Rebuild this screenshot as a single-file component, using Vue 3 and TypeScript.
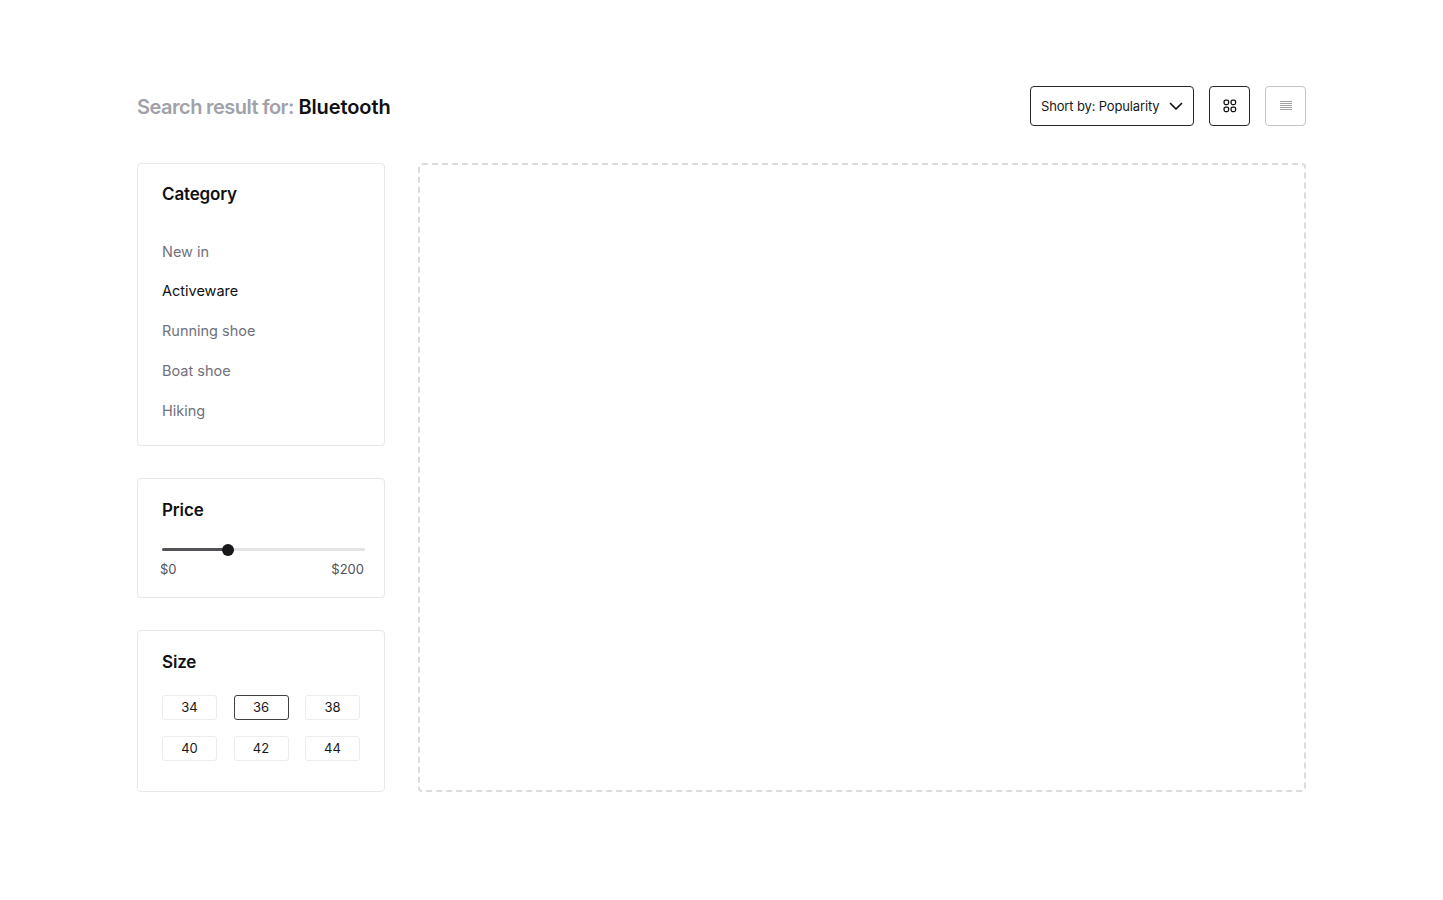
<script setup lang="ts">
const categories: { name: string; active?: boolean }[] = [
  { name: 'New in' },
  { name: 'Activeware', active: true },
  { name: 'Running shoe' },
  { name: 'Boat shoe' },
  { name: 'Hiking' },
]
const sizes: { label: string; active?: boolean }[] = [
  { label: '34' },
  { label: '36', active: true },
  { label: '38' },
  { label: '40' },
  { label: '42' },
  { label: '44' },
]
</script>

<template>
  <div class="page">
    <header class="top">
      <h1 class="title"><span class="muted">Search result for:</span> Bluetooth</h1>
      <div class="tools">
        <button class="sort">
          <span>Short by: Popularity</span>
          <svg width="14" height="14" viewBox="0 0 14 14" fill="none">
            <path d="M1.5 4.5 7 10l5.5-5.5" stroke="#111114" stroke-width="1.7" stroke-linecap="round" stroke-linejoin="round" />
          </svg>
        </button>
        <button class="view active" aria-label="Grid view">
          <svg width="14" height="14" viewBox="0 0 14 14" fill="none" stroke="#111114" stroke-width="1.3">
            <rect x="1.1" y="1.1" width="4.5" height="4.5" rx="1.5" />
            <rect x="8.1" y="1.1" width="4.5" height="4.5" rx="1.5" />
            <rect x="1.1" y="8.1" width="4.5" height="4.5" rx="1.5" />
            <rect x="8.1" y="8.1" width="4.5" height="4.5" rx="1.5" />
          </svg>
        </button>
        <button class="view muted-view" aria-label="List view">
          <svg width="14" height="12" viewBox="0 0 14 12" fill="none" stroke="#a1a1a6" stroke-width="1">
            <path d="M1 1.5h12M1 3.5h12M1 5.5h12M1 7.5h12M1 9.5h12" />
          </svg>
        </button>
      </div>
    </header>

    <div class="body">
      <aside class="side">
        <section class="card cat">
          <h2>Category</h2>
          <ul>
            <li v-for="c in categories" :key="c.name" :class="{ on: c.active }">{{ c.name }}</li>
          </ul>
        </section>
        <section class="card price">
          <h2>Price</h2>
          <div class="track"><div class="fill"></div><div class="thumb"></div></div>
          <div class="range"><span>$0</span><span>$200</span></div>
        </section>
        <section class="card size">
          <h2>Size</h2>
          <div class="grid">
            <div v-for="s in sizes" :key="s.label" class="chip" :class="{ on: s.active }">{{ s.label }}</div>
          </div>
        </section>
      </aside>
      <main class="slot"></main>
    </div>
  </div>
</template>

<style>
html, body { margin: 0; background: #fff; }
</style>

<style scoped>
.page {
  box-sizing: border-box;
  width: 1443px;
  height: 900px;
  padding: 86px 137px 0;
  font-family: Inter, "Noto Sans", sans-serif;
  color: #111114;
}
.top {
  display: flex;
  justify-content: space-between;
  align-items: center;
  height: 40px;
}
.title {
  margin: 0;
  font-size: 20px;
  line-height: 28px;
  font-weight: 600;
  letter-spacing: -0.1px;
  position: relative;
  top: 1px;
  word-spacing: -0.5px;
}
.muted { color: #a1a1aa; letter-spacing: -0.5px; }
.tools { display: flex; gap: 15px; }
button {
  font-family: inherit;
  background: #fff;
  padding: 0;
  display: flex;
  align-items: center;
  justify-content: center;
  box-sizing: border-box;
  height: 40px;
}
.sort {
  width: 164px;
  border: 1px solid #27272a;
  border-radius: 4px;
  justify-content: space-between;
  padding: 0 10px;
  font-size: 13px;
  letter-spacing: -0.15px;
  color: #18181b;
}
.view {
  width: 41px;
  border: 1px solid #c4c4c8;
  border-radius: 4px;
}
.view.active { border-color: #27272a; }
.body {
  display: flex;
  gap: 33px;
  margin-top: 37px;
}
.side {
  width: 248px;
  flex: none;
  display: flex;
  flex-direction: column;
}
.card {
  box-sizing: border-box;
  border: 1px solid #e8e8ea;
  border-radius: 4px;
  padding: 0 19px 0 24px;
}
h2 {
  margin: 0;
  font-size: 17px;
  line-height: 24px;
  font-weight: 600;
  letter-spacing: -0.15px;
}
.cat { height: 283px; padding-top: 18px; }
ul { list-style: none; margin: 26px 0 0; padding: 0; }
li {
  height: 40px;
  line-height: 40px;
  font-size: 14.5px;
  color: #71717a;
  margin-top: -0.3px;
}
li.on { color: #111114; }
.price { height: 120px; margin-top: 32px; padding-top: 19px; }
.track {
  position: relative;
  height: 3px;
  margin-top: 26px;
  background: #e4e4e7;
  border-radius: 2px;
}
.fill {
  width: 66px;
  height: 3px;
  background: #52525b;
  border-radius: 2px;
}
.thumb {
  position: absolute;
  left: 60px;
  top: -4.5px;
  width: 12px;
  height: 12px;
  border-radius: 50%;
  background: #18181b;
}
.range {
  display: flex;
  justify-content: space-between;
  margin: 7.5px 1px 0 -2px;
  font-size: 13px;
  line-height: 20px;
  color: #52525b;
}
.size { height: 162px; margin-top: 32px; padding-top: 19px; }
.grid {
  display: grid;
  grid-template-columns: repeat(3, 55px);
  column-gap: 16.5px;
  row-gap: 16px;
  margin-top: 21px;
}
.chip {
  box-sizing: border-box;
  height: 25px;
  border: 1px solid #ececee;
  border-radius: 3px;
  font-size: 13px;
  line-height: 23px;
  text-align: center;
  color: #18181b;
}
.chip.on { border-color: #3f3f46; }
.slot {
  flex: 1;
  height: 629px;
  box-sizing: border-box;
  border: 2px dashed #dcdcdf;
  border-radius: 4px;
}
</style>
